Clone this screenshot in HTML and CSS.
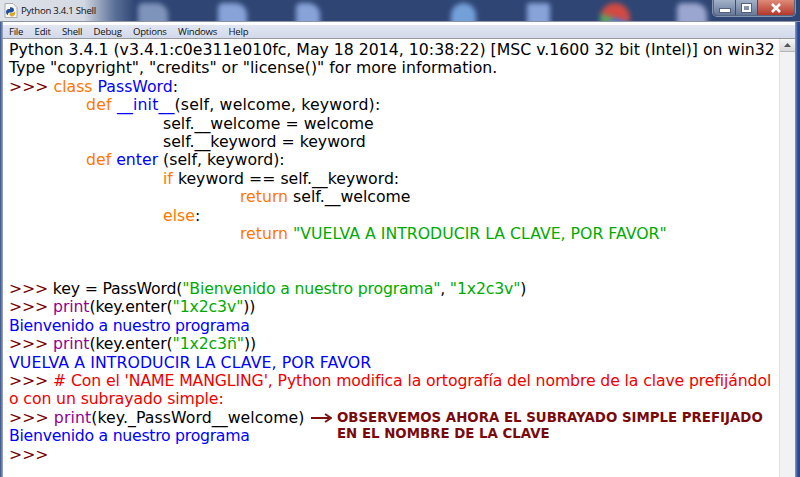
FILE: index.html
```html
<!DOCTYPE html>
<html lang="en">
<head>
<meta charset="utf-8">
<title>Python 3.4.1 Shell</title>
<link rel="stylesheet" href="styles.css">
</head>
<body>
<div class="window">
  <div class="titlebar">
    <span class="blob b1"></span><span class="blob b2"></span><span class="blob b3"></span><span class="blob b4"></span><span class="blob b5"></span><span class="blob b6"></span><span class="blob b7"></span>
    <div class="glass"></div>
    <svg class="appicon" width="14" height="15" viewBox="0 0 14 15"><path d="M1 .5h8l4 4v10H1z" fill="#f6f6f6" stroke="#9a9a9a" stroke-width=".8"/><path d="M2 9c0-2.500 2-3 4-3V4.500c2-.5 4 .5 4 2.500s-2 2.500-4 2.500-2 1-2 2.500C3 12 2 10.500 2 9z" fill="#1f4f95"/><path d="M6 10c2 0 3.500-.2 5-1.500.8 2.500-.5 5-3.500 5L5.500 12z" fill="#d8a92a"/></svg>
    <span class="wintitle">Python 3.4.1 Shell</span>
    <div class="controls">
      <span class="ctl"><i class="min"></i></span>
      <span class="ctl"><i class="max"></i></span>
      <span class="ctl close"><svg width="12" height="10" viewBox="0 0 12 10"><path d="M2 1l8 8M10 1l-8 8" stroke="#fff" stroke-width="2.600"/></svg></span>
    </div>
  </div>
  <div class="frame">
    <nav class="menubar"><span>File</span><span>Edit</span><span>Shell</span><span>Debug</span><span>Options</span><span>Windows</span><span>Help</span></nav>
    <div class="body">
      <div class="shell">
        <div>Python 3.4.1 (v3.4.1:c0e311e010fc, May 18 2014, 10:38:22) [MSC v.1600 32 bit (Intel)] on win32</div>
        <div>Type "copyright", "credits" or "license()" for more information.</div>
        <div><span class="prompt">&gt;&gt;&gt; </span><span class="kw">class</span> <span class="def">PassWord</span>:</div>
        <div class="wide">	<span class="kw">def</span> <span class="def">__init__</span>(self, welcome, keyword):</div>
        <div>		self.__welcome = welcome</div>
        <div>		self.__keyword = keyword</div>
        <div>	<span class="kw">def</span> <span class="def">enter</span> (self, keyword):</div>
        <div>		<span class="kw">if</span> keyword == self.__keyword:</div>
        <div>			<span class="kw">return</span> self.__welcome</div>
        <div>		<span class="kw">else</span>:</div>
        <div>			<span class="kw">return</span> <span class="str">"VUELVA A INTRODUCIR LA CLAVE, POR FAVOR"</span></div>
        <div> </div>
        <div> </div>
        <div class="tight"><span class="prompt">&gt;&gt;&gt; </span>key = PassWord(<span class="str">"Bienvenido a nuestro programa"</span>, <span class="str">"1x2c3v"</span>)</div>
        <div class="tighter"><span class="prompt">&gt;&gt;&gt; </span><span class="bi">print</span>(key.enter(<span class="str">"1x2c3v"</span>))</div>
        <div class="out tightest">Bienvenido a nuestro programa</div>
        <div class="tighter"><span class="prompt">&gt;&gt;&gt; </span><span class="bi">print</span>(key.enter(<span class="str">"1x2c3ñ"</span>))</div>
        <div class="out upper">VUELVA A INTRODUCIR LA CLAVE, POR FAVOR</div>
        <div class="comment"><span class="prompt">&gt;&gt;&gt; </span><span class="cm"># Con el 'NAME MANGLING', Python modifica la ortografía del nombre de la clave prefijándol</span></div>
        <div class="cm tighter">o con un subrayado simple:</div>
        <div class="upper"><span class="prompt">&gt;&gt;&gt; </span><span class="bi">print</span>(key._PassWord__welcome)</div>
        <div class="out tightest">Bienvenido a nuestro programa</div>
        <div class="prompt">&gt;&gt;&gt;</div>
        <div class="note">
          <svg class="arrow" width="21" height="10" viewBox="0 0 21 10"><path d="M0 5h18" stroke="#7a1010" stroke-width="2"/><path d="M14 1l6 4-6 4" fill="none" stroke="#7a1010" stroke-width="2"/></svg>
          <p>OBSERVEMOS AHORA EL SUBRAYADO SIMPLE PREFIJADO<br>EN EL NOMBRE DE LA CLAVE</p>
        </div>
      </div>
      <div class="scrollbar">
        <span class="sbtn"><svg width="9" height="6" viewBox="0 0 9 6"><path d="M4.500 1l3.500 4H1z" fill="#555"/></svg></span>
      </div>
    </div>
  </div>
</div>
</body>
</html>
```
FILE: styles.css
```css
html, body { margin: 0; padding: 0; }
body { width: 800px; height: 477px; overflow: hidden; font-family: "DejaVu Sans", sans-serif; background: #2f4674; }
.window { display: flex; flex-direction: column; width: 800px; height: 477px; }
.titlebar { position: relative; display: flex; align-items: center; height: 22px; flex: none; overflow: hidden; background: #2f4674; border-bottom: 1px solid #8d94a3; box-sizing: border-box; }
.blob { position: absolute; top: 3px; height: 26px; filter: blur(2.500px); background: #87a3d8; border-radius: 5px 12px 0 0; }
.b1 { left: 138px; width: 30px; background: #7f94bb; }
.b2 { left: 218px; width: 29px; }
.b3 { left: 296px; width: 24px; }
.b4 { left: 451px; width: 25px; background: #74a0da; border-radius: 14px 14px 0 0; }
.b5 { left: 527px; width: 23px; border-radius: 3px; }
.b6 { left: 600px; width: 30px; height: 30px; border-radius: 50%; background: conic-gradient(#d24a43 0 30%, #3f7de0 30% 65%, #5aa45e 65% 80%, #d24a43 80%); }
.b7 { left: 677px; width: 30px; background: #9aa6cf; }
.glass { position: absolute; left: 0; top: 0; bottom: 0; width: 135px; background: linear-gradient(90deg, #dfe3ea 0, #d3d8e2 62%, rgba(120,140,175,.6) 85%, rgba(47,70,116,0) 100%); }
.appicon { position: relative; margin-left: 4px; flex: none; }
.wintitle { position: relative; margin-left: 3px; font: 9.600px "Open Sans", sans-serif; letter-spacing: -.25px; color: #111; }
.controls { position: absolute; left: 713px; top: 0; display: flex; height: 15px; border: 1px solid #59667f; border-top: 0; border-radius: 0 0 4px 4px; overflow: hidden; box-shadow: 0 0 0 1px rgba(220,225,235,.5); }
.ctl { display: flex; align-items: center; justify-content: center; width: 21px; background: linear-gradient(#a3b1c8, #66789a); border-right: 1px solid #3f4d68; }
.ctl.close { width: 36px; border-right: 0; background: linear-gradient(#df8a78, #b2382c); }
.min { display: block; width: 10px; height: 3px; margin-top: 6px; background: #fff; box-shadow: 0 0 0 1px #55617a; }
.max { display: block; width: 9px; height: 8px; border: 2px solid #fff; box-sizing: border-box; box-shadow: 0 0 0 1px #55617a; }
.frame { flex: 1; display: flex; flex-direction: column; min-height: 0; padding-left: 3px; padding-right: 5px; background: linear-gradient(90deg, #31508c 0, #7f8fb0 2px, #aab 3px, #aab 0) left / 3px 100% no-repeat, linear-gradient(90deg, #8b9ab8 0, #24449a 3px, #2c4a88 100%) right / 5px 100% no-repeat; }
.menubar { display: flex; gap: 11.400px; flex: none; align-items: center; padding-left: 6px; padding-top: 3px; font: 9.600px "Open Sans", sans-serif; letter-spacing: -.25px; color: #111; background: linear-gradient(#fff 0, #fff 3px, #e2e6f2 3px, #d2d9ea 100%); border-bottom: 1px solid #9a9a9a; height: 13px; }
.body { flex: 1; display: flex; min-height: 0; background: #fff; }
.shell { position: relative; flex: 1; padding-top: 2px; padding-left: 6px; font-size: 15.720px; line-height: 18.400px; color: #000; tab-size: 77px; overflow: hidden; }
.shell > div { white-space: pre; height: 18.400px; }
.prompt { color: #770000; }
.kw { color: #ff7700; }
.def { color: #0000ff; }
.str { color: #00aa00; }
.bi { color: #900090; }
.out { color: #0000ff; }
.cm { color: #ee0000; }
.wide { letter-spacing: .17px; }
.upper { letter-spacing: .08px; }
.tight { letter-spacing: -.17px; }
.tighter { letter-spacing: -.12px; }
.tightest { letter-spacing: -.28px; }
.comment { letter-spacing: -.13px; }
.shell > .note { position: absolute; left: 308px; top: 371px; display: flex; gap: 5px; height: auto; letter-spacing: 0; }
.arrow { margin-top: 3px; flex: none; }
.note p { margin: 0; font: bold 13.350px/16px "DejaVu Sans", sans-serif; color: #7a0a0a; }
.scrollbar { width: 15px; flex: none; background: #f2f2f2; border-left: 1px solid #e2e2e2; }
.sbtn { display: flex; align-items: center; justify-content: center; height: 12px; background: linear-gradient(#f6f6f6, #d8d8d8); border-bottom: 1px solid #b5b5b5; }
```
